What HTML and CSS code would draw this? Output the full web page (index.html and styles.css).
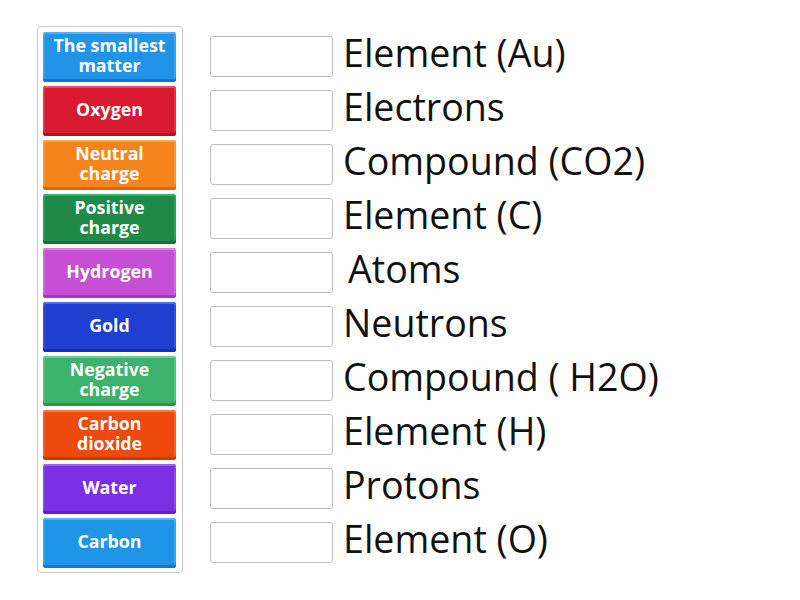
FILE: index.html
```html
<!DOCTYPE html>
<html>
<head>
<meta charset="utf-8">
<link rel="stylesheet" href="styles.css">
</head>
<body>
<div class="page">
  <div class="deck">
    <div class="tile c1">The smallest matter</div>
    <div class="tile c2">Oxygen</div>
    <div class="tile c3">Neutral charge</div>
    <div class="tile c4">Positive charge</div>
    <div class="tile c5">Hydrogen</div>
    <div class="tile c6">Gold</div>
    <div class="tile c7">Negative charge</div>
    <div class="tile c8">Carbon dioxide</div>
    <div class="tile c9">Water</div>
    <div class="tile c10">Carbon</div>
  </div>
  <div class="targets">
    <div class="row"><div class="box"></div><span class="label">Element (Au)</span></div>
    <div class="row"><div class="box"></div><span class="label">Electrons</span></div>
    <div class="row"><div class="box"></div><span class="label">Compound (CO2)</span></div>
    <div class="row"><div class="box"></div><span class="label">Element (C)</span></div>
    <div class="row"><div class="box"></div><span class="label indent">Atoms</span></div>
    <div class="row"><div class="box"></div><span class="label">Neutrons</span></div>
    <div class="row"><div class="box"></div><span class="label">Compound ( H2O)</span></div>
    <div class="row"><div class="box"></div><span class="label">Element (H)</span></div>
    <div class="row"><div class="box"></div><span class="label">Protons</span></div>
    <div class="row"><div class="box"></div><span class="label">Element (O)</span></div>
  </div>
</div>
</body>
</html>
```

FILE: styles.css
```css
html, body {
  margin: 0;
  padding: 0;
  background: #ffffff;
}
body {
  font-family: "Open Sans", "Liberation Sans", sans-serif;
}
.page {
  display: flex;
  align-items: flex-start;
  padding: 26px 0 0 37px;
}
.deck {
  display: flex;
  flex-direction: column;
  gap: 4px;
  padding: 5px 6px 4px 5px;
  border: 1px solid #c8c8c8;
  border-radius: 4px;
}
.tile {
  width: 133px;
  height: 50px;
  box-sizing: border-box;
  display: flex;
  align-items: center;
  justify-content: center;
  text-align: center;
  color: #ffffff;
  font-weight: 700;
  font-size: 17.8px;
  line-height: 20px;
  padding: 0 3px 4px;
  border-radius: 3px;
  background: var(--c);
  box-shadow: inset 0 2px 0 var(--l), inset 0 -3px 0 var(--d), inset 2px 0 0 var(--l2), inset -2px 0 0 var(--l2);
}
.c1 { --c: #2194e8; --l: #56b0f2; --l2: #3aa3ee; --d: #1276c8; }
.c2 { --c: #d71a30; --l: #ea4d5e; --l2: #e03347; --d: #b01024; }
.c3 { --c: #f5841c; --l: #ffa34c; --l2: #fb9434; --d: #d8680c; }
.c4 { --c: #1f8a47; --l: #35b566; --l2: #27a058; --d: #176d37; }
.c5 { --c: #c64fd6; --l: #dc7fe6; --l2: #d266de; --d: #a836bb; }
.c6 { --c: #1e3fd0; --l: #4f6ce6; --l2: #3050dc; --d: #1530ac; }
.c7 { --c: #3db26c; --l: #6acb8f; --l2: #52bf7c; --d: #2c9356; }
.c8 { --c: #ee4a0d; --l: #ff7840; --l2: #f65e24; --d: #c73a06; }
.c9 { --c: #7b2ee4; --l: #a064f2; --l2: #8c45ec; --d: #6320c6; }
.c10 { --c: #1f95e8; --l: #56b2f2; --l2: #3aa4ee; --d: #1478cc; }

.targets {
  display: flex;
  flex-direction: column;
  gap: 13px;
  margin-left: 27px;
  padding-top: 10px;
}
.row {
  display: flex;
  align-items: center;
  height: 41px;
}
.box {
  width: 123px;
  height: 41px;
  box-sizing: border-box;
  border: 1px solid #bdbdbd;
  border-radius: 3px;
  background: #ffffff;
  flex: none;
}
.label {
  margin-left: 10px;
  margin-bottom: 9px;
  font-size: 37.6px;
  line-height: 41px;
  color: #111111;
  white-space: pre;
}
.label.indent {
  margin-left: 15px;
}
```
